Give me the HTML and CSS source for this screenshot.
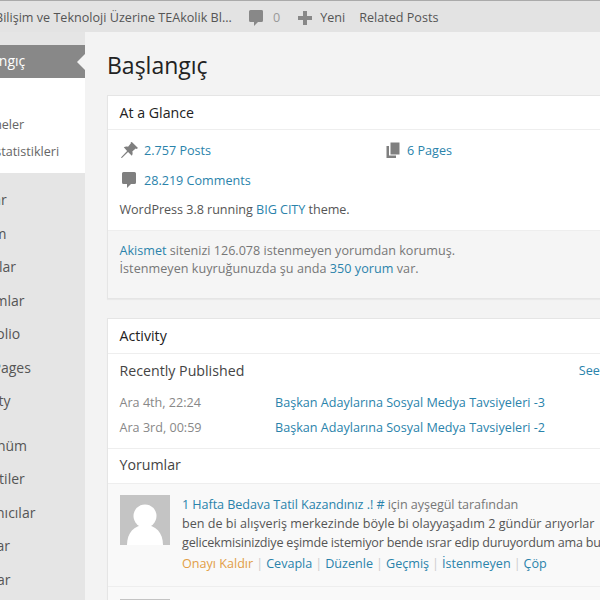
FILE: index.html
```html
<!DOCTYPE html>
<html lang="tr">
<head>
<meta charset="utf-8">
<title>Başlangıç</title>
<link rel="stylesheet" href="styles.css">
</head>
<body>
<header class="topbar">
  <span class="site-name">Bilişim ve Teknoloji Üzerine TEAkolik Bl…</span>
  <span class="bar-item comments">
    <svg class="icon" viewBox="0 0 14 16"><path d="M1.500 0h11A1.500 1.500 0 0 1 14 1.500v9a1.500 1.500 0 0 1-1.500 1.500H9L5 16v-4H1.500A1.500 1.500 0 0 1 0 10.500v-9A1.500 1.500 0 0 1 1.500 0z"/></svg>
    <span class="count">0</span>
  </span>
  <span class="bar-item new">
    <svg class="icon" viewBox="0 0 14 14"><path d="M5 0h4v5h5v4H9v5H5V9H0V5h5z"/></svg>
    <span>Yeni</span>
  </span>
  <span class="bar-item related">Related Posts</span>
</header>
<div class="layout">
  <nav class="sidebar">
    <div class="menu">
      <a class="menu-item current">Başlangıç</a>
      <div class="submenu">
        <a class="sub-item">Ana Sayfa</a>
        <a class="sub-item">Güncellemeler</a>
        <a class="sub-item">Sitenizin İstatistikleri</a>
      </div>
      <a class="menu-item">Yazılar</a>
      <a class="menu-item">Ortam</a>
      <a class="menu-item">Sayfalar</a>
      <a class="menu-item">Yorumlar</a>
      <a class="menu-item">Portfolio</a>
      <a class="menu-item">Sub Pages</a>
      <a class="menu-item">Activity</a>
      <a class="menu-item group">Görünüm</a>
      <a class="menu-item">Eklentiler</a>
      <a class="menu-item">Kullanıcılar</a>
      <a class="menu-item">Araçlar</a>
      <a class="menu-item">Ayarlar</a>
    </div>
  </nav>
  <main class="content">
    <h1 class="page-title">Başlangıç</h1>
    <section class="box glance">
      <h2 class="box-title">At a Glance</h2>
      <div class="glance-body">
        <div class="glance-grid">
          <span class="stat">
            <svg class="stat-icon" viewBox="-1 -1 19 19"><path d="M11.500 0L18 6.500l-1.500 1-1-.5-3.500 3c.6 1.800.4 3.300-.5 4.500L7.500 10.500 1 17l-1-.5L6.500 9.500 3 5.500C4.300 4.700 5.800 4.500 7.500 5l3-3.500-.3-.8z"/></svg>
            <a>2.757 Posts</a>
          </span>
          <span class="stat">
            <svg class="stat-icon" viewBox="0 0 18 18"><path d="M5.500 1.500h9v12h-9z"/><path d="M1.500 5H4v9.500h7V17H1.500z"/></svg>
            <a>6 Pages</a>
          </span>
          <span class="stat">
            <svg class="stat-icon" viewBox="0 0 18 18"><path d="M3.500 1h11A1.500 1.500 0 0 1 16 2.500v9a1.500 1.500 0 0 1-1.500 1.500H11l-4 4v-4H3.500A1.500 1.500 0 0 1 2 11.500v-9A1.500 1.500 0 0 1 3.500 1z"/></svg>
            <a>28.219 Comments</a>
          </span>
        </div>
        <p class="version">WordPress 3.8 running <a>BIG CITY</a> theme.</p>
      </div>
      <div class="akismet">
        <p><a>Akismet</a> sitenizi 126.078 istenmeyen yorumdan korumuş.</p>
        <p class="queue">İstenmeyen kuyruğunuzda şu anda <a>350 yorum</a> var.</p>
      </div>
    </section>
    <section class="box activity">
      <h2 class="box-title">Activity</h2>
      <div class="published">
        <div class="section-head">
          <h3 class="section-title">Recently Published</h3>
          <a class="see-all">See all</a>
        </div>
        <div class="post-row"><span class="post-date">Ara 4th, 22:24</span><a>Başkan Adaylarına Sosyal Medya Tavsiyeleri -3</a></div>
        <div class="post-row"><span class="post-date">Ara 3rd, 00:59</span><a>Başkan Adaylarına Sosyal Medya Tavsiyeleri -2</a></div>
      </div>
      <h3 class="section-title comments-title">Yorumlar</h3>
      <article class="comment">
        <svg class="avatar" viewBox="0 0 50 50"><rect width="50" height="50" fill="#c4c4c4"/><circle cx="25" cy="21" r="11.500" fill="#fff"/><path d="M7 50c0-12 7-20 18-20s18 8 18 20z" fill="#fff"/></svg>
        <div class="comment-body">
          <p class="comment-head"><a>1 Hafta Bedava Tatil Kazandınız .! #</a> için ayşegül tarafından</p>
          <p>ben de bi alışveriş merkezinde böyle bi olayyaşadım 2 gündür arıyorlar</p>
          <p class="comment-last">gelicekmisinizdiye eşimde istemiyor bende ısrar edip duruyordum ama bu</p>
          <p class="comment-actions"><a class="unapprove">Onayı Kaldır</a><i>|</i><a>Cevapla</a><i>|</i><a>Düzenle</a><i>|</i><a>Geçmiş</a><i>|</i><a>İstenmeyen</a><i>|</i><a>Çöp</a></p>
        </div>
      </article>
      <article class="comment next">
        <svg class="avatar" viewBox="0 0 50 50"><rect width="50" height="50" fill="#c4c4c4"/></svg>
      </article>
    </section>
  </main>
</div>
</body>
</html>
```
FILE: styles.css
```css
* { box-sizing: border-box; }
html, body { margin: 0; height: 600px; overflow: hidden; }
body { font: 12.6px/19px "Open Sans", sans-serif; color: #555; background: #f3f3f3; width: 600px; }
a { color: #2a83ab; text-decoration: none; }
p, h1, h2, h3 { margin: 0; font-weight: 400; }

.topbar { height: 32px; background: #e3e3e3; border-top: 1px solid #aaa; padding-top: 2px; display: flex; align-items: center; white-space: nowrap; color: #555; }
.site-name { margin-left: -5px; width: 236px; flex: none; }
.bar-item { display: flex; align-items: center; flex: none; }
.icon { fill: #888; display: block; flex: none; }
.comments { margin-left: 18px; }
.comments .icon { width: 14px; height: 16px; }
.count { margin-left: 10px; color: #999; }
.new { margin-left: 18px; }
.new .icon { width: 14px; height: 14px; margin-right: 8px; }
.related { margin-left: 14px; }

.layout { display: flex; height: 568px; }
.sidebar { width: 85px; flex: none; background: #e5e5e5; overflow: hidden; }
.menu { width: 160px; margin-left: -75px; padding-top: 13px; }
.menu-item { display: block; height: 33.500px; padding-left: 39px; font-size: 14px; line-height: 34px; color: #555; white-space: nowrap; }
.menu-item.group { margin-top: 11px; }
.current { position: relative; background: #888; color: #fff; height: 33px; line-height: 31px; }
.current::after { content: ""; position: absolute; right: 0; top: 9px; border: 8px solid transparent; border-right-color: #f3f3f3; border-left-width: 0; }
.submenu { background: #fff; height: 95px; padding: 6px 0 0 14px; margin-bottom: 10px; }
.sub-item { display: block; height: 27px; line-height: 27px; color: #666; white-space: nowrap; }

.content { flex: none; width: 515px; padding: 0 0 0 22px; }
.page-title { font-size: 23px; line-height: 29px; color: #222; padding-top: 19px; margin-bottom: 15px; }
.box { width: 556px; background: #fff; border: 1px solid #e5e5e5; box-shadow: 0 1px 1px rgba(0,0,0,.04); }
.box-title { font-size: 14.200px; line-height: 33px; height: 34px; padding-left: 11.500px; border-bottom: 1px solid #eee; color: #222; }
.glance-body { padding: 10px 11.500px 0; height: 100px; }
.glance-grid { display: grid; grid-template-columns: 265px 1fr; row-gap: 10px; }
.stat { display: flex; align-items: center; height: 20px; }
.stat-icon { width: 18px; height: 18px; fill: #7f7f7f; margin-right: 6.500px; flex: none; }
.stat:nth-child(2) .stat-icon { margin-right: 4.500px; }
.version { margin-top: 10px; letter-spacing: -.04px; }
.akismet { height: 68px; padding: 11px 11.500px 0; background: #f5f5f5; border-top: 1px solid #eee; color: #777; line-height: 18px; }
.queue { letter-spacing: .04px; }

.activity { margin-top: 19px; height: 400px; }
.activity .box-title { height: 35px; }
.published { padding: 0 11.500px; height: 95px; border-bottom: 1px solid #eee; }
.section-head { display: flex; justify-content: space-between; height: 31px; padding-top: 7px; white-space: nowrap; }
.section-title { font-size: 14.200px; line-height: 20px; color: #444; }
.see-all { margin-right: 34px; line-height: 20px; }
.post-row { display: flex; height: 25px; line-height: 25px; white-space: nowrap; }
.section-head + .post-row { margin-top: 5px; }
.post-date { width: 155.500px; color: #888; flex: none; }
.comments-title { height: 34px; padding: 6px 11.500px 0; line-height: 20px; }
.comment { display: flex; gap: 12px; padding: 11px 12px 0; height: 104px; background: #f9f9f9; border-top: 1px solid #eee; border-bottom: 1px solid #eee; white-space: nowrap; color: #555; }
.comment-head { color: #777; letter-spacing: -.06px; }
.comment-last { letter-spacing: -.21px; }
.avatar { width: 50px; height: 50px; flex: none; }
.comment-body { line-height: 19px; }
.comment-actions { margin-top: 2px; }
.comment-actions i { font-style: normal; color: #ccc; margin: 0 3px; }
.unapprove { color: #e29e47; }
.comment.next { border: 0; padding-top: 12px; }
```
